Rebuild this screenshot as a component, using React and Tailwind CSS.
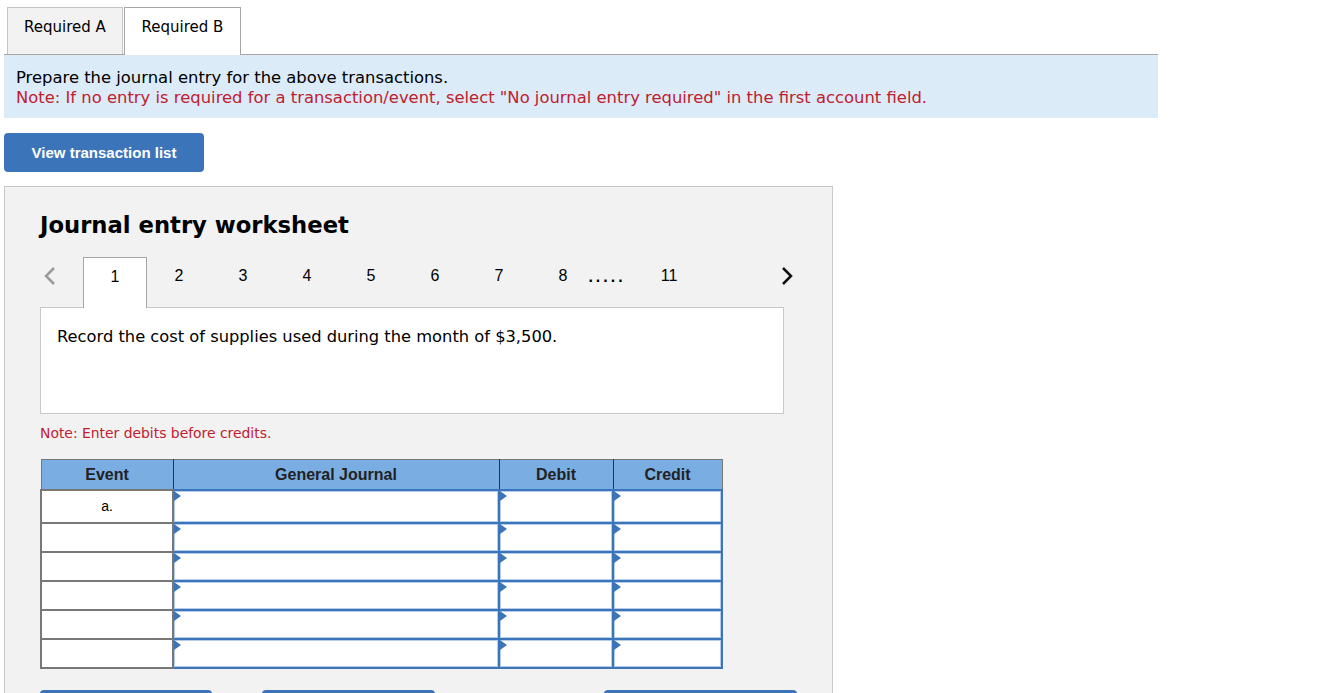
import React from "react";

const verdana = { fontFamily: '"DejaVu Sans", Verdana, sans-serif' };

const rows = ["a.", "", "", "", "", ""];
const pages = ["1", "2", "3", "4", "5", "6", "7", "8"];

const InputCell = () => (
  <td className="relative p-0 border-2 border-[#3c74b9] bg-white">
    <span className="absolute inset-0 border border-[#b5cdec]" />
    <span className="absolute left-0 top-0 w-0 h-0 border-y-[5px] border-y-transparent border-l-[7px] border-l-[#3c74b9]" />
  </td>
);

const App = () => {
  return (
    <div className="w-[1332px] h-[693px] overflow-hidden bg-white text-black">
      {/* top tabs */}
      <div className="pt-[7px] pl-[4px] w-[1158px]">
        <div className="flex items-end border-b border-[#a6a6a6] pl-[3px]">
          <div className="w-[116px] h-[47px] flex justify-center pt-[10px] bg-[#f2f2f2] border border-b-0 border-[#c4c4c4] text-[15px] leading-[18px]" style={verdana}>
            Required A
          </div>
          <div className="ml-[1px] w-[117px] h-[48px] -mb-px flex justify-center pt-[10px] bg-white border border-b-0 border-[#a6a6a6] text-[15px] leading-[18px]" style={verdana}>
            Required B
          </div>
        </div>
      </div>

      {/* instructions */}
      <div className="ml-[4px] w-[1154px] h-[63px] bg-[#dcebf8] pl-[12px] pt-[13px] text-[16.4px] leading-[20px]" style={verdana}>
        <p>Prepare the journal entry for the above transactions.</p>
        <p className="text-[#c0202e]">
          Note: If no entry is required for a transaction/event, select "No journal entry required" in the first account field.
        </p>
      </div>

      <button className="mt-[15px] ml-[4px] w-[200px] h-[39px] pt-[2px] rounded-[4px] bg-[#3c74b9] text-white font-bold text-[15px] font-['Liberation_Sans',Arial,sans-serif]">
        View transaction list
      </button>

      {/* worksheet panel */}
      <div className="mt-[14px] ml-[4px] w-[829px] h-[600px] bg-[#f2f2f2] border border-[#c8c8c8] pl-[35px]">
        <h2 className="mt-[22px] text-[22.7px] font-bold leading-[32px]" style={verdana}>
          Journal entry worksheet
        </h2>

        <div className="mt-[16px] flex items-end w-[744px] relative z-10 font-['Liberation_Sans',Arial,sans-serif] text-[16px] leading-[20px]">
          <div className="w-[43px] h-[50px] flex items-start pt-[9px] pl-[4px]">
            <svg width="12" height="20" viewBox="0 0 12 20">
              <polyline points="10,2 2,10 10,18" fill="none" stroke="#9b9b9b" strokeWidth="2.5" />
            </svg>
          </div>
          {pages.map((p, i) => (
            <div
              key={p}
              className={
                i === 0
                  ? "w-[64px] h-[51px] -mb-px flex justify-center pt-[9px] bg-white border border-b-0 border-[#a6a6a6]"
                  : "w-[64px] h-[50px] flex justify-center pt-[9px]"
              }
            >
              {p}
            </div>
          ))}
          <div className="h-[50px] w-[40px] -ml-[8px] flex justify-center pt-[10px] tracking-[3px] font-bold text-[16px]">
            .....
          </div>
          <div className="h-[50px] w-[44px] ml-[20px] flex justify-center pt-[9px]">11</div>
          <div className="flex-1 h-[50px] flex items-start pt-[9px] justify-end">
            <svg width="14" height="20" viewBox="0 0 14 20" className="-mr-[10px]">
              <polyline points="3,2 11,10 3,18" fill="none" stroke="#111" strokeWidth="2.5" />
            </svg>
          </div>
        </div>

        <div className="w-[744px] h-[107px] bg-white border border-[#c8c8c8] pl-[16px] pt-[17px] text-[16.3px]" style={verdana}>
          Record the cost of supplies used during the month of $3,500.
        </div>

        <p className="mt-[9px] text-[13.9px] text-[#c0202e]" style={verdana}>
          Note: Enter debits before credits.
        </p>

        <table className="mt-[15px] border-collapse font-['Liberation_Sans',Arial,sans-serif]">
          <thead>
            <tr className="h-[31px] bg-[#7aaee3] text-[16px] font-bold text-[#222]">
              <th className="w-[132px] border border-[#333] border-l-[#777] border-t-[#777] font-bold">Event</th>
              <th className="w-[326px] border border-[#333] border-t-[#777] font-bold">General Journal</th>
              <th className="w-[114px] border border-[#333] border-t-[#777] font-bold">Debit</th>
              <th className="w-[109px] border border-[#333] border-t-[#777] border-r-[#777] font-bold">Credit</th>
            </tr>
          </thead>
          <tbody>
            {rows.map((r, i) => (
              <tr key={i} className={i === 0 ? "h-[33px]" : "h-[29px]"}>
                <td className="border-2 border-[#777] bg-white text-center text-[14px] align-middle">{r}</td>
                <InputCell />
                <InputCell />
                <InputCell />
              </tr>
            ))}
          </tbody>
        </table>

        <div className="mt-[21px] flex">
          <div className="w-[172px] h-[8px] rounded-t-[4px] bg-[#3c74b9]" />
          <div className="ml-[50px] w-[173px] h-[8px] rounded-t-[4px] bg-[#3c74b9]" />
          <div className="ml-[169px] w-[193px] h-[8px] rounded-t-[4px] bg-[#3c74b9]" />
        </div>
      </div>
    </div>
  );
};

export default App;
